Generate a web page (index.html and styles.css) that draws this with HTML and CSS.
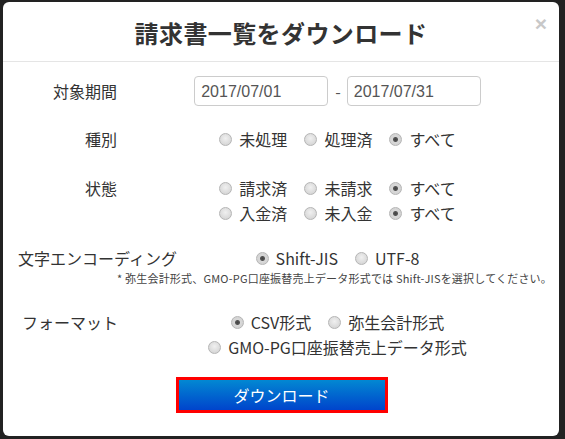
FILE: index.html
```html
<html>
	<head>
		<meta charset="utf-8">
		<link rel="stylesheet" href="styles.css">
	</head>
	<body>
		<div class="modal">
			<div class="modal-header">
				<h1 class="modal-title">請求書一覧をダウンロード</h1>
				<button class="close" type="button">×</button>
			</div>
			<form class="modal-body">
				<div class="row row-period">
					<div class="label">対象期間</div>
					<div class="field">
						<input class="date" type="text" value="2017/07/01"/>
						<span class="dash">-</span>
						<input class="date" type="text" value="2017/07/31"/>
					</div>
				</div>
				<div class="row row-kind">
					<div class="label">種別</div>
					<div class="field">
						<div class="line">
							<label class="opt"><input type="radio" name="kind"/>未処理</label>
							<label class="opt"><input type="radio" name="kind"/>処理済</label>
							<label class="opt"><input type="radio" name="kind" checked/>すべて</label>
						</div>
					</div>
				</div>
				<div class="row row-status">
					<div class="label">状態</div>
					<div class="field">
						<div class="line">
							<label class="opt"><input type="radio" name="billing"/>請求済</label>
							<label class="opt"><input type="radio" name="billing"/>未請求</label>
							<label class="opt"><input type="radio" name="billing" checked/>すべて</label>
						</div>
						<div class="line">
							<label class="opt"><input type="radio" name="payment"/>入金済</label>
							<label class="opt"><input type="radio" name="payment"/>未入金</label>
							<label class="opt"><input type="radio" name="payment" checked/>すべて</label>
						</div>
					</div>
				</div>
				<div class="row row-encoding">
					<div class="label label-left">文字エンコーディング</div>
					<div class="field">
						<div class="line">
							<label class="opt"><input type="radio" name="encoding" checked/>Shift-JIS</label>
							<label class="opt"><input type="radio" name="encoding"/>UTF-8</label>
						</div>
					</div>
				</div>
				<p class="note">* 弥生会計形式、GMO-PG口座振替売上データ形式では Shift-JISを選択してください。</p>
				<div class="row row-format">
					<div class="label label-left label-indent">フォーマット</div>
					<div class="field">
						<div class="line">
							<label class="opt"><input type="radio" name="format" checked/>CSV形式</label>
							<label class="opt"><input type="radio" name="format"/>弥生会計形式</label>
						</div>
						<div class="line">
							<label class="opt"><input type="radio" name="format"/>GMO-PG口座振替売上データ形式</label>
						</div>
					</div>
				</div>
				<div class="actions">
					<button class="btn-download" type="button">ダウンロード</button>
				</div>
			</form>
		</div>
	</body>
</html>
```

FILE: styles.css
```css
body {
	margin: 0;
	padding: 2px 6px 3px 3px;
	background-color: #222;
	font-family: "Noto Sans CJK JP", "Liberation Sans", sans-serif;
	color: #333;
}
.modal {
	position: relative;
	background-color: #fff;
	border-radius: 6px;
}
.modal-header {
	padding: 15px 15px 12px;
	border-bottom: 1px solid #e5e5e5;
	text-align: center;
}
.modal-title {
	margin: 0;
	font-size: 24px;
	line-height: 32px;
	font-weight: bold;
	letter-spacing: 0.4px;
	color: #333;
}
.close {
	position: absolute;
	top: 11px;
	right: 12px;
	padding: 0;
	border: 0;
	background: none;
	font-family: "Liberation Sans", sans-serif;
	font-size: 21px;
	font-weight: bold;
	line-height: 21px;
	color: #c8c8c8;
}
.modal-body {
	margin: 0;
	padding: 14px 14px 23px 15px;
	font-size: 16px;
}
.row {
	display: flex;
	line-height: 25px;
}
.label {
	width: 112px;
	flex: none;
	padding-right: 13px;
	box-sizing: border-box;
	text-align: right;
	white-space: nowrap;
}
.label-left {
	text-align: left;
}
.label-indent {
	padding-left: 4px;
}
.field {
	flex: 1;
	display: flex;
	flex-direction: column;
	align-items: center;
}
.row-period {
	line-height: 30px;
}
.row-period .field {
	flex-direction: row;
	justify-content: center;
}
.date {
	width: 134px;
	height: 30px;
	box-sizing: border-box;
	padding: 1px 6px 0;
	border: 1px solid #ccc;
	border-radius: 4px;
	font-family: "Liberation Sans", sans-serif;
	font-size: 16px;
	color: #555;
}
.dash {
	margin: 0 6px 0 7px;
	color: #555;
}
.row-kind {
	margin-top: 21px;
}
.row-status {
	margin-top: 24px;
}
.row-encoding {
	margin-top: 20px;
}
.row-format {
	margin-top: 24px;
}
.line {
	display: flex;
	gap: 17px;
	white-space: nowrap;
}
.opt {
	display: flex;
	align-items: center;
}
.opt input {
	appearance: none;
	-webkit-appearance: none;
	width: 13px;
	height: 13px;
	margin: 0 7px 0 0;
	border: 1px solid #b5b5b5;
	border-radius: 50%;
	background: radial-gradient(circle at 50% 40%, #f0f0f0 0, #dcdcdc 60%, #cfcfcf 100%);
	box-sizing: border-box;
}
.opt input:checked {
	background: radial-gradient(circle, #444 0, #555 2px, #d8d8d8 3px, #cfcfcf 100%);
}
.note {
	margin: 0 -7px 0 0;
	font-size: 11px;
	line-height: 15px;
	letter-spacing: 0.2px;
	text-align: right;
	color: #444;
}
.actions {
	margin-top: 17px;
	display: flex;
	justify-content: center;
}
.btn-download {
	width: 212px;
	height: 36px;
	border: 3px solid #f00;
	background: linear-gradient(#0288d2, #0044cc);
	color: #fff;
	font-family: inherit;
	font-size: 16px;
}
```
